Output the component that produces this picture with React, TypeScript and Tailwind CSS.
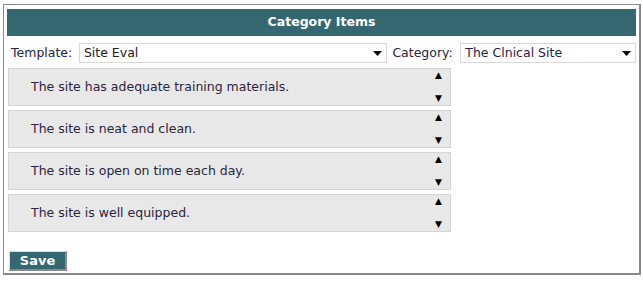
import React from "react";

const items = [
  "The site has adequate training materials.",
  "The site is neat and clean.",
  "The site is open on time each day.",
  "The site is well equipped.",
];

function Caret() {
  return (
    <svg width="9" height="5" viewBox="0 0 9 5" className="shrink-0">
      <path d="M0 0H9L4.5 5Z" fill="#000" />
    </svg>
  );
}

export default function App() {
  return (
    <div
      className="w-[643px] h-[281px] bg-white pt-[4px] pl-[3px] pr-[2px]"
      style={{ fontFamily: '"DejaVu Sans", Verdana, sans-serif' }}
    >
      <div className="h-[271px] border border-[#8a8a8a] border-b-2 border-r-2 px-[3px] pt-[4px] flex flex-col">
        <div className="h-[27px] shrink-0 bg-[#346770] text-white font-bold text-[12.5px] flex items-center justify-center">
          Category Items
        </div>
        <div className="flex items-center h-[28px] shrink-0 mt-[3px] text-[12.5px] text-[#2a2440] pl-[4px]">
          <span className="w-[68px]">Template:</span>
          <div className="w-[309px] h-[20px] border border-[#d8d8d8] flex items-center justify-between pl-[4px] pr-[4px] text-[#222]">
            <span>Site Eval</span>
            <Caret />
          </div>
          <span className="ml-[5px] w-[68px]">Category:</span>
          <div className="w-[176px] h-[20px] border border-[#d8d8d8] flex items-center justify-between pl-[4px] pr-[4px] text-[#2a1a4a]">
            <span>The Clnical Site</span>
            <Caret />
          </div>
        </div>
        <div className="flex flex-col gap-[4px] w-[443px] ml-[1px] mt-[1px]">
          {items.map((t) => (
            <div
              key={t}
              className="h-[38px] bg-[#e8e8e8] border border-[#d4d4d4] flex items-center justify-between pl-[22px] pr-[8px]"
            >
              <span className="text-[12.5px] text-[#2a2440]">{t}</span>
              <div className="flex flex-col justify-between h-[32px] text-[9px] leading-none text-black">
                <span>▲</span>
                <span>▼</span>
              </div>
            </div>
          ))}
        </div>
        <div className="mt-[19px] ml-[2px] flex">
          <button className="w-[58px] h-[20px] bg-[#346770] text-white font-bold text-[13px] leading-none border-t border-l border-t-[#d8e0e0] border-l-[#d8e0e0] border-r-2 border-b-2 border-r-[#8a8a8a] border-b-[#8a8a8a]">
            Save
          </button>
        </div>
      </div>
    </div>
  );
}
